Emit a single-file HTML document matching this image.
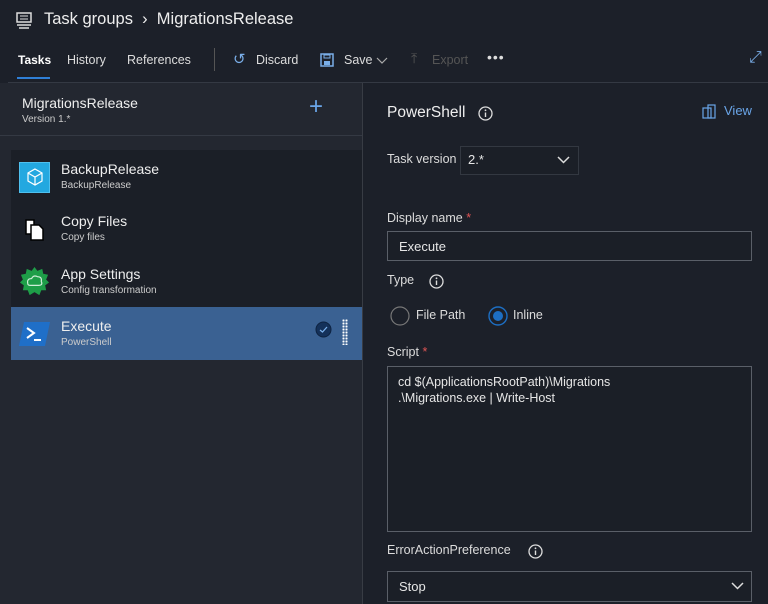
<!DOCTYPE html>
<html><head><style>
*{margin:0;padding:0;box-sizing:border-box}
body{width:768px;height:604px;overflow:hidden;background:#1c2029;font-family:"Segoe UI","Liberation Sans",sans-serif;color:#e6e6e6;position:relative}
.a{position:absolute;white-space:nowrap}
.lbl{font-size:12.5px;color:#dcdcdc}
.box{position:absolute;border:1px solid #5a5f68;background:#1b1f27}
</style></head><body>
<svg class="a" style="left:15px;top:12px" width="18" height="18" viewBox="0 0 18 18"><rect x="2" y="1" width="14" height="9" fill="none" stroke="#ddd" stroke-width="1.5"/><line x1="5" y1="4" x2="13" y2="4" stroke="#ddd"/><line x1="5" y1="7" x2="13" y2="7" stroke="#ddd"/><line x1="2" y1="13" x2="16" y2="13" stroke="#ddd" stroke-width="1.5"/><line x1="4" y1="16" x2="14" y2="16" stroke="#ddd" stroke-width="1.5"/></svg>
<div class="a" style="left:44px;top:10px;font-size:16.5px;color:#eee">Task groups &nbsp;›&nbsp; MigrationsRelease</div>
<div class="a" style="left:18px;top:53px;font-size:12px;font-weight:bold;color:#fff">Tasks</div>
<div class="a" style="left:17px;top:77px;width:33px;height:2px;background:#2f7fd6"></div>
<div class="a" style="left:67px;top:53px;font-size:12.5px;color:#ddd">History</div>
<div class="a" style="left:127px;top:53px;font-size:12.5px;color:#ddd">References</div>
<div class="a" style="left:214px;top:48px;width:1px;height:23px;background:#555"></div>
<div class="a" style="left:233px;top:50px;font-size:15px;color:#7aaee8">↺</div>
<div class="a" style="left:256px;top:53px;font-size:12.5px;color:#ddd">Discard</div>
<svg class="a" style="left:320px;top:53px" width="14" height="14" viewBox="0 0 14 14"><rect x="1" y="1" width="12" height="12" fill="none" stroke="#7aaee8" stroke-width="1.5"/><rect x="4" y="8" width="6" height="4" fill="#7aaee8"/><rect x="4" y="2" width="6" height="3" fill="none" stroke="#7aaee8"/></svg>
<div class="a" style="left:344px;top:53px;font-size:12.5px;color:#ddd">Save</div>
<svg class="a" style="left:376px;top:57px" width="12" height="7" viewBox="0 0 12 7"><path d="M1 1L6 6L11 1" fill="none" stroke="#aaa" stroke-width="1.2"/></svg>
<div class="a" style="left:411px;top:50px;font-size:14px;color:#555">⤒</div>
<div class="a" style="left:432px;top:53px;font-size:12.5px;color:#555">Export</div>
<div class="a" style="left:487px;top:49px;font-size:14px;color:#ddd;letter-spacing:1px">•••</div>
<div class="a" style="left:749px;top:49px;font-size:16px;color:#7aaee8">⤢</div>
<div class="a" style="left:8px;top:82px;width:760px;height:1px;background:#343943"></div>
<div class="a" style="left:0;top:83px;width:362px;height:521px;background:#232730"></div>
<div class="a" style="left:362px;top:83px;width:1px;height:521px;background:#383c44"></div>
<div class="a" style="left:22px;top:95px;font-size:14px;color:#eee">MigrationsRelease</div>
<div class="a" style="left:22px;top:114px;font-size:10px;color:#ccc">Version 1.*</div>
<div class="a" style="left:309px;top:93px;font-size:24px;color:#6aa5e8;font-weight:300">+</div>
<div class="a" style="left:0;top:135px;width:362px;height:1px;background:#343943"></div>
<div class="a" style="left:11px;top:150px;width:351px;height:157px;background:#1b1f27"></div>
<div class="a" style="left:11px;top:307px;width:351px;height:53px;background:#3a6192"></div>
<div class="a" style="left:19px;top:162px;width:31px;height:31px;background:#23a8e0;border:1px solid #4fc0ee"></div>
<svg class="a" style="left:24px;top:166px" width="22" height="22" viewBox="0 0 22 22"><path d="M11 3L18 7V15L11 19L4 15V7Z M4 7L11 11L18 7 M11 11V19" fill="none" stroke="#fff" stroke-width="1.2"/></svg>
<svg class="a" style="left:24px;top:218px" width="22" height="24" viewBox="0 0 22 24"><path d="M2 2H10V16H2Z" fill="#fff" stroke="#000" stroke-width="1.5"/><path d="M7 7H15L19 11V22H7Z" fill="#fff" stroke="#000" stroke-width="1.5"/></svg>
<svg class="a" style="left:19px;top:266px" width="31" height="31" viewBox="0 0 32 32"><path d="M16 1L19 5L24 3L25 8L30 9L28 14L31 17L27 20L28 25L23 25L21 30L16 27L11 30L9 25L4 25L5 20L1 17L4 14L2 9L7 8L8 3L13 5Z" fill="#1e9e48"/><path d="M9 18Q8 13 13 13Q15 9 19 11Q24 11 23 16Q25 20 20 20H12Q9 20 9 18Z" fill="none" stroke="#cfeed8" stroke-width="1.2"/></svg>
<svg class="a" style="left:19px;top:322px" width="31" height="24" viewBox="0 0 31 24"><path d="M5 0H31L26 24H0Z" fill="#1f6fc8"/><path d="M8 6L15 11L8 16" fill="none" stroke="#fff" stroke-width="2"/><line x1="15" y1="18" x2="22" y2="18" stroke="#fff" stroke-width="2"/></svg>
<div class="a" style="left:61px;top:161px;font-size:14px;color:#eee">BackupRelease</div>
<div class="a" style="left:61px;top:180px;font-size:10px;color:#ccc">BackupRelease</div>
<div class="a" style="left:61px;top:213px;font-size:14px;color:#eee">Copy Files</div>
<div class="a" style="left:61px;top:232px;font-size:10px;color:#ccc">Copy files</div>
<div class="a" style="left:61px;top:266px;font-size:14px;color:#eee">App Settings</div>
<div class="a" style="left:61px;top:285px;font-size:10px;color:#ccc">Config transformation</div>
<div class="a" style="left:61px;top:318px;font-size:14px;color:#eee">Execute</div>
<div class="a" style="left:61px;top:337px;font-size:10px;color:#ccc">PowerShell</div>
<svg class="a" style="left:315px;top:321px" width="17" height="17" viewBox="0 0 17 17"><circle cx="8.5" cy="8.5" r="7.5" fill="#14315a" stroke="#0d2240"/><path d="M5 9L7.5 11L12 6" fill="none" stroke="#7ab0ea" stroke-width="1.3"/></svg>
<div class="a" style="left:342px;top:319px;width:6px;height:26px;background-image:radial-gradient(circle,#fff 1px,transparent 1.2px);background-size:3px 3px"></div>
<div class="a" style="left:387px;top:104px;font-size:15.5px;color:#eee">PowerShell</div>
<svg class="a" style="left:478px;top:106px" width="15" height="15" viewBox="0 0 15 15"><circle cx="7.5" cy="7.5" r="6.5" fill="none" stroke="#ddd" stroke-width="1.3"/><line x1="7.5" y1="6.5" x2="7.5" y2="11" stroke="#ddd" stroke-width="1.4"/><circle cx="7.5" cy="4.3" r=".9" fill="#ddd"/></svg>
<svg class="a" style="left:702px;top:103px" width="15" height="16" viewBox="0 0 15 16"><rect x="1" y="5" width="8" height="10" fill="none" stroke="#6aa5e8" stroke-width="1.2"/><rect x="6" y="2" width="7" height="13" fill="none" stroke="#6aa5e8" stroke-width="1.2"/></svg>
<div class="a" style="left:724px;top:103px;font-size:13px;color:#6aa5e8">View</div>
<div class="a lbl" style="left:387px;top:152px">Task version</div>
<div class="box" style="left:460px;top:146px;width:119px;height:29px;border-color:#333841"></div>
<div class="a" style="left:468px;top:152px;font-size:13px">2.*</div>
<svg class="a" style="left:557px;top:156px" width="13" height="8" viewBox="0 0 13 8"><path d="M1 1L6.5 6.5L12 1" fill="none" stroke="#ddd" stroke-width="1.5"/></svg>
<div class="a lbl" style="left:387px;top:211px">Display name <span style="color:#e05555">*</span></div>
<div class="box" style="left:387px;top:231px;width:365px;height:30px"></div>
<div class="a" style="left:399px;top:239px;font-size:13px">Execute</div>
<div class="a lbl" style="left:387px;top:273px">Type</div>
<svg class="a" style="left:429px;top:274px" width="15" height="15" viewBox="0 0 15 15"><circle cx="7.5" cy="7.5" r="6.5" fill="none" stroke="#ddd" stroke-width="1.3"/><line x1="7.5" y1="6.5" x2="7.5" y2="11" stroke="#ddd" stroke-width="1.4"/><circle cx="7.5" cy="4.3" r=".9" fill="#ddd"/></svg>
<svg class="a" style="left:390px;top:306px" width="20" height="20"><circle cx="10" cy="10" r="9" fill="none" stroke="#777" stroke-width="1.2"/></svg>
<div class="a lbl" style="left:416px;top:308px">File Path</div>
<svg class="a" style="left:488px;top:306px" width="20" height="20"><circle cx="10" cy="10" r="9" fill="none" stroke="#1d6ec2" stroke-width="1.4"/><circle cx="10" cy="10" r="5" fill="#1d6ec2"/></svg>
<div class="a lbl" style="left:513px;top:308px">Inline</div>
<div class="a lbl" style="left:387px;top:345px">Script <span style="color:#e05555">*</span></div>
<div class="box" style="left:387px;top:366px;width:365px;height:166px"></div>
<div class="a" style="left:398px;top:374px;font-size:13px;line-height:16px;color:#e6e6e6;transform:scaleX(.96);transform-origin:left">cd $(ApplicationsRootPath)\Migrations<br>.\Migrations.exe | Write-Host</div>
<div class="a lbl" style="left:387px;top:543px">ErrorActionPreference</div>
<svg class="a" style="left:528px;top:544px" width="15" height="15" viewBox="0 0 15 15"><circle cx="7.5" cy="7.5" r="6.5" fill="none" stroke="#ddd" stroke-width="1.3"/><line x1="7.5" y1="6.5" x2="7.5" y2="11" stroke="#ddd" stroke-width="1.4"/><circle cx="7.5" cy="4.3" r=".9" fill="#ddd"/></svg>
<div class="box" style="left:387px;top:571px;width:365px;height:31px"></div>
<div class="a" style="left:399px;top:579px;font-size:13px">Stop</div>
<svg class="a" style="left:731px;top:582px" width="13" height="8" viewBox="0 0 13 8"><path d="M1 1L6.5 6.5L12 1" fill="none" stroke="#ddd" stroke-width="1.5"/></svg>
</body></html>
